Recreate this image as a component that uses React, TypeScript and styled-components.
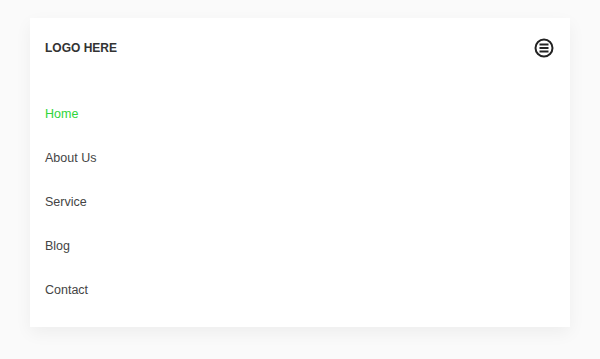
import styled, { createGlobalStyle } from 'styled-components';

const GlobalStyle = createGlobalStyle`
  html, body {
    margin: 0;
    padding: 0;
    background: #fafafa;
    font-family: 'Liberation Sans', Arial, sans-serif;
  }
`;

const Page = styled.div`
  padding: 18px 30px 32px;
`;

const Card = styled.nav`
  background: #fff;
  padding: 0 15px 15px;
  box-shadow: 0 6px 16px rgba(0, 0, 0, 0.05);
`;

const Header = styled.header`
  height: 59px;
  display: flex;
  align-items: center;
  justify-content: space-between;
`;

const Logo = styled.div`
  font-size: 12px;
  font-weight: bold;
  color: #333;
`;

const MenuButton = styled.button`
  border: none;
  background: none;
  padding: 0;
  margin-right: 0;
  display: flex;
  cursor: pointer;
`;

const Menu = styled.ul`
  list-style: none;
  margin: 0;
  padding: 15px 0 0;
`;

const Item = styled.li<{ $active?: boolean }>`
  height: 44px;
  display: flex;
  align-items: center;
  font-size: 12.5px;
  color: ${(p) => (p.$active ? '#2fd53a' : '#444')};
`;

const links = ['Home', 'About Us', 'Service', 'Blog', 'Contact'];

function MenuIcon() {
  return (
    <svg width="22" height="22" viewBox="0 0 22 22" fill="none" stroke="#222" strokeWidth="2">
      <circle cx="11" cy="11" r="8.5" />
      <line x1="6.5" y1="7.5" x2="15.5" y2="7.5" />
      <line x1="6.5" y1="11" x2="15.5" y2="11" />
      <line x1="6.5" y1="14.5" x2="15.5" y2="14.5" />
    </svg>
  );
}

export default function App() {
  return (
    <>
      <GlobalStyle />
      <Page>
        <Card>
          <Header>
            <Logo>LOGO HERE</Logo>
            <MenuButton aria-label="menu">
              <MenuIcon />
            </MenuButton>
          </Header>
          <Menu>
            {links.map((l, i) => (
              <Item key={l} $active={i === 0}>
                {l}
              </Item>
            ))}
          </Menu>
        </Card>
      </Page>
    </>
  );
}
